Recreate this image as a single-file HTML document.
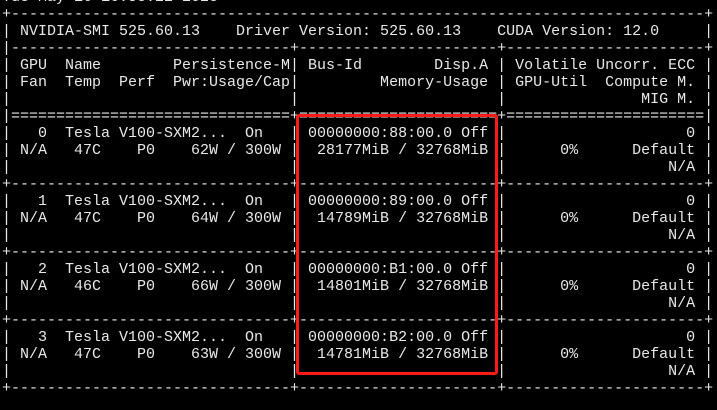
<!DOCTYPE html>
<html><head><meta charset="utf-8"><style>
html,body{margin:0;padding:0;background:#000;width:717px;height:410px;overflow:hidden;position:relative}
pre{position:absolute;left:2px;top:-11.5px;margin:0;font-family:"Liberation Mono",monospace;font-size:15px;line-height:17px;color:#e8e8e8;white-space:pre}
.box{position:absolute;left:296px;top:114px;width:196px;height:255px;border:3px solid #ff1a1a;border-radius:3px}
</style></head><body>
<pre>Tue May 16 16:53:22 2023
+-----------------------------------------------------------------------------+
| NVIDIA-SMI 525.60.13    Driver Version: 525.60.13    CUDA Version: 12.0     |
|-------------------------------+----------------------+----------------------+
| GPU  Name        Persistence-M| Bus-Id        Disp.A | Volatile Uncorr. ECC |
| Fan  Temp  Perf  Pwr:Usage/Cap|         Memory-Usage | GPU-Util  Compute M. |
|                               |                      |               MIG M. |
|===============================+======================+======================|
|   0  Tesla V100-SXM2...  On   | 00000000:88:00.0 Off |                    0 |
| N/A   47C    P0    62W / 300W |  28177MiB / 32768MiB |      0%      Default |
|                               |                      |                  N/A |
+-------------------------------+----------------------+----------------------+
|   1  Tesla V100-SXM2...  On   | 00000000:89:00.0 Off |                    0 |
| N/A   47C    P0    64W / 300W |  14789MiB / 32768MiB |      0%      Default |
|                               |                      |                  N/A |
+-------------------------------+----------------------+----------------------+
|   2  Tesla V100-SXM2...  On   | 00000000:B1:00.0 Off |                    0 |
| N/A   46C    P0    66W / 300W |  14801MiB / 32768MiB |      0%      Default |
|                               |                      |                  N/A |
+-------------------------------+----------------------+----------------------+
|   3  Tesla V100-SXM2...  On   | 00000000:B2:00.0 Off |                    0 |
| N/A   47C    P0    63W / 300W |  14781MiB / 32768MiB |      0%      Default |
|                               |                      |                  N/A |
+-------------------------------+----------------------+----------------------+</pre>
<div class="box"></div>
</body></html>
